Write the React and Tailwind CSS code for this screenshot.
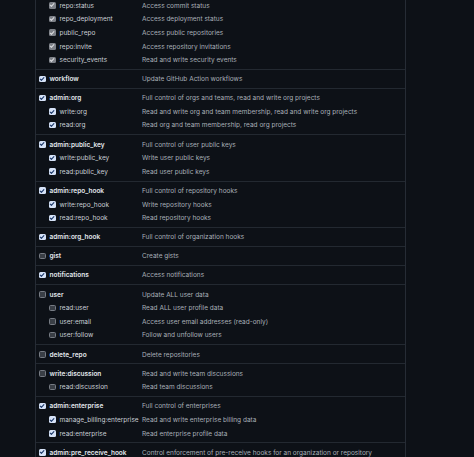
const groups = [
  {
    cut: true,
    rows: [
      { name: "repo:status", desc: "Access commit status", state: "locked", sub: true },
      { name: "repo_deployment", desc: "Access deployment status", state: "locked", sub: true },
      { name: "public_repo", desc: "Access public repositories", state: "locked", sub: true },
      { name: "repo:invite", desc: "Access repository invitations", state: "locked", sub: true },
      { name: "security_events", desc: "Read and write security events", state: "locked", sub: true },
    ],
  },
  { rows: [{ name: "workflow", desc: "Update GitHub Action workflows", state: "on" }] },
  {
    rows: [
      { name: "admin:org", desc: "Full control of orgs and teams, read and write org projects", state: "on" },
      { name: "write:org", desc: "Read and write org and team membership, read and write org projects", state: "on", sub: true },
      { name: "read:org", desc: "Read org and team membership, read org projects", state: "on", sub: true },
    ],
  },
  {
    rows: [
      { name: "admin:public_key", desc: "Full control of user public keys", state: "on" },
      { name: "write:public_key", desc: "Write user public keys", state: "on", sub: true },
      { name: "read:public_key", desc: "Read user public keys", state: "on", sub: true },
    ],
  },
  {
    rows: [
      { name: "admin:repo_hook", desc: "Full control of repository hooks", state: "on" },
      { name: "write:repo_hook", desc: "Write repository hooks", state: "on", sub: true },
      { name: "read:repo_hook", desc: "Read repository hooks", state: "on", sub: true },
    ],
  },
  { rows: [{ name: "admin:org_hook", desc: "Full control of organization hooks", state: "on" }] },
  { rows: [{ name: "gist", desc: "Create gists", state: "off" }] },
  { rows: [{ name: "notifications", desc: "Access notifications", state: "on" }] },
  {
    rows: [
      { name: "user", desc: "Update ALL user data", state: "off" },
      { name: "read:user", desc: "Read ALL user profile data", state: "off", sub: true },
      { name: "user:email", desc: "Access user email addresses (read-only)", state: "off", sub: true },
      { name: "user:follow", desc: "Follow and unfollow users", state: "off", sub: true },
    ],
  },
  { rows: [{ name: "delete_repo", desc: "Delete repositories", state: "off" }] },
  {
    rows: [
      { name: "write:discussion", desc: "Read and write team discussions", state: "off" },
      { name: "read:discussion", desc: "Read team discussions", state: "off", sub: true },
    ],
  },
  {
    rows: [
      { name: "admin:enterprise", desc: "Full control of enterprises", state: "on" },
      { name: "manage_billing:enterprise", desc: "Read and write enterprise billing data", state: "on", sub: true },
      { name: "read:enterprise", desc: "Read enterprise profile data", state: "on", sub: true },
    ],
  },
  {
    rows: [
      { name: "admin:pre_receive_hook", desc: "Control enforcement of pre-receive hooks for an organization or repository", state: "on" },
    ],
  },
];

const Box = ({ state }) => {
  if (state === "off") {
    return (
      <span className="block w-[6.5px] h-[6.5px] mb-[1px] rounded-[1.5px] border border-[#767b83] bg-[#3a3f46] shrink-0" />
    );
  }
  const locked = state === "locked";
  return (
    <span
      className={`flex items-center justify-center w-[6.5px] h-[6.5px] mb-[1px] rounded-[1.5px] shrink-0 ${
        locked ? "bg-[#7d8188]" : "bg-[#d6e3f8]"
      }`}
    >
      <svg viewBox="0 0 8 8" className="w-[6px] h-[6px]" fill="none">
        <path
          d="M1.6 4.2 L3.2 5.8 L6.5 2.2"
          stroke={locked ? "#d9dbde" : "#1b3768"}
          strokeWidth="1.4"
          strokeLinecap="round"
          strokeLinejoin="round"
        />
      </svg>
    </span>
  );
};

const Row = ({ name, desc, state, sub }) => (
  <div className="flex items-center h-[13.65px] leading-none">
    <div className={`flex items-center w-[106px] shrink-0 ${sub ? "pl-[13px]" : "pl-[3px]"}`}>
      <Box state={state} />
      <span
        className={`whitespace-nowrap ml-[4px] ${
          sub ? "text-[#c9cfd6]" : "font-semibold text-[#e3e8ee]"
        }`}
      >
        {name}
      </span>
    </div>
    <span className="whitespace-nowrap text-[#a9b0b8]">{desc}</span>
  </div>
);

export default function App() {
  return (
    <div
      className="w-[474px] h-[457px] overflow-hidden bg-[#0d1117] text-[6.5px]"
      style={{ fontFamily: "Inter, 'Liberation Sans', sans-serif" }}
    >
      <div className="ml-[35px] w-[371px] min-h-full border-x border-[#262c35]">
        {groups.map((g, i) => (
          <div
            key={i}
            className={
              g.cut
                ? "mt-[-0.9px] pb-[1.5px]"
                : "border-t border-[#232931] pt-[2.75px] pb-[1.7px]"
            }
          >
            {g.rows.map((r) => (
              <Row key={r.name} {...r} />
            ))}
          </div>
        ))}
      </div>
    </div>
  );
}
